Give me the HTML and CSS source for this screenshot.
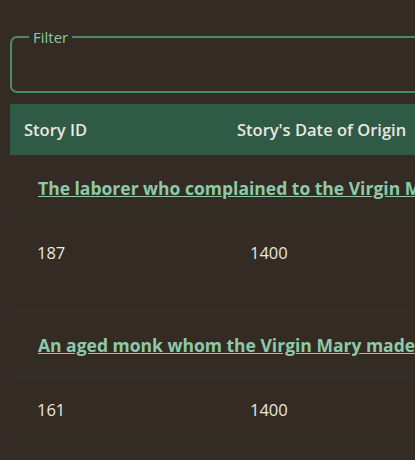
FILE: index.html
```html
<!DOCTYPE html>
<html>
<head>
<meta charset="utf-8">
<link rel="stylesheet" href="styles.css">
</head>
<body>
<div class="page">
  <fieldset class="filter">
    <legend class="filter-label">Filter</legend>
    <input class="filter-input" type="text">
  </fieldset>
  <table class="stories">
    <thead>
      <tr class="head-row">
        <th class="col-id">Story ID</th>
        <th class="col-date">Story's Date of Origin</th>
        <th class="col-extra">Manuscript Source</th>
      </tr>
    </thead>
    <tbody>
      <tr class="title-row">
        <td colspan="3"><a class="story-link" href="#">The laborer who complained to the Virgin Mary about his hardships</a></td>
      </tr>
      <tr class="data-row">
        <td>187</td>
        <td>1400</td>
        <td class="extra">Collected miracles<br>of the Virgin</td>
      </tr>
      <tr class="title-row">
        <td colspan="3"><a class="story-link" href="#">An aged monk whom the Virgin Mary made young again</a></td>
      </tr>
      <tr class="data-row">
        <td>161</td>
        <td>1400</td>
        <td class="extra">Collected miracles</td>
      </tr>
    </tbody>
  </table>
</div>
</body>
</html>
```

FILE: styles.css
```css
html, body {
  margin: 0;
  padding: 0;
  overflow: hidden;
  background: #342c24;
}
body {
  font-family: "Open Sans", "Noto Sans", sans-serif;
  color: #ece6df;
}
.page {
  padding: 28px 0 0 10px;
  width: 800px;
}
.filter {
  margin: 0;
  padding: 0 14px;
  border: 2px solid #4b8b69;
  border-radius: 7px;
  box-sizing: border-box;
  height: 65px;
}
.filter-label {
  color: #8dc8a5;
  font-size: 15px;
  padding: 0 4px;
  margin-left: 3px;
  line-height: 18px;
}
.filter-input {
  background: transparent;
  border: none;
  outline: none;
  width: 100%;
}
.stories {
  margin-top: 11px;
  border-collapse: collapse;
  width: 800px;
}
.head-row {
  background: #2f5a46;
}
.head-row th {
  text-align: left;
  font-weight: 600;
  font-size: 16.5px;
  height: 51px;
  padding: 0 14px;
  color: #e6e8e0;
}
.col-id { width: 185px; }
.col-date { width: 200px; }
.title-row td {
  padding: 21px 28px 19px;
  border-bottom: 1px solid #2c3433;
}
.story-link {
  color: #8ccaa9;
  font-weight: 700;
  font-size: 17.5px;
  line-height: 24px;
  white-space: nowrap;
}
.data-row td {
  vertical-align: top;
  padding: 22px 27px 20px;
  font-size: 16.5px;
  font-weight: 500;
  line-height: 22px;
  border-bottom: 1px solid #2c3433;
}
.data-row .extra {
  line-height: 24.5px;
}
```
